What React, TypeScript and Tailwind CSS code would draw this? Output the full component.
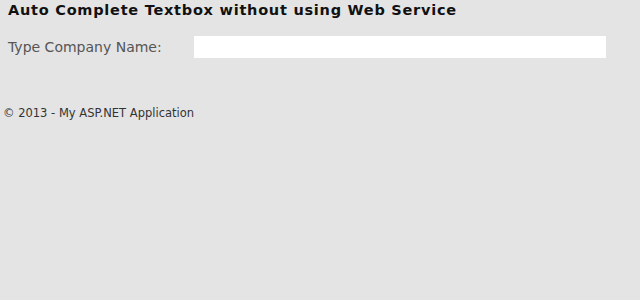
import React from 'react';

const App = () => {
  return (
    <div className="w-[640px] h-[300px] bg-[#e4e4e4] overflow-hidden font-['DejaVu_Sans',sans-serif]">
      <h2 className="pl-2 pt-px text-[14.5px] leading-[18px] tracking-[0.75px] font-bold text-[#111]">
        Auto Complete Textbox without using Web Service
      </h2>
      <div className="flex items-center pl-2 mt-[17px] h-[22px]">
        <label className="w-[186px] text-[14px] text-[#555]">Type Company Name:</label>
        <input type="text" className="w-[412px] h-[22px] bg-white outline-none border-0" />
      </div>
      <footer className="pl-[3px] mt-[48px] text-[11.5px] leading-[14px] text-[#333]">
        © 2013 - My ASP.NET Application
      </footer>
    </div>
  );
};

export default App;
